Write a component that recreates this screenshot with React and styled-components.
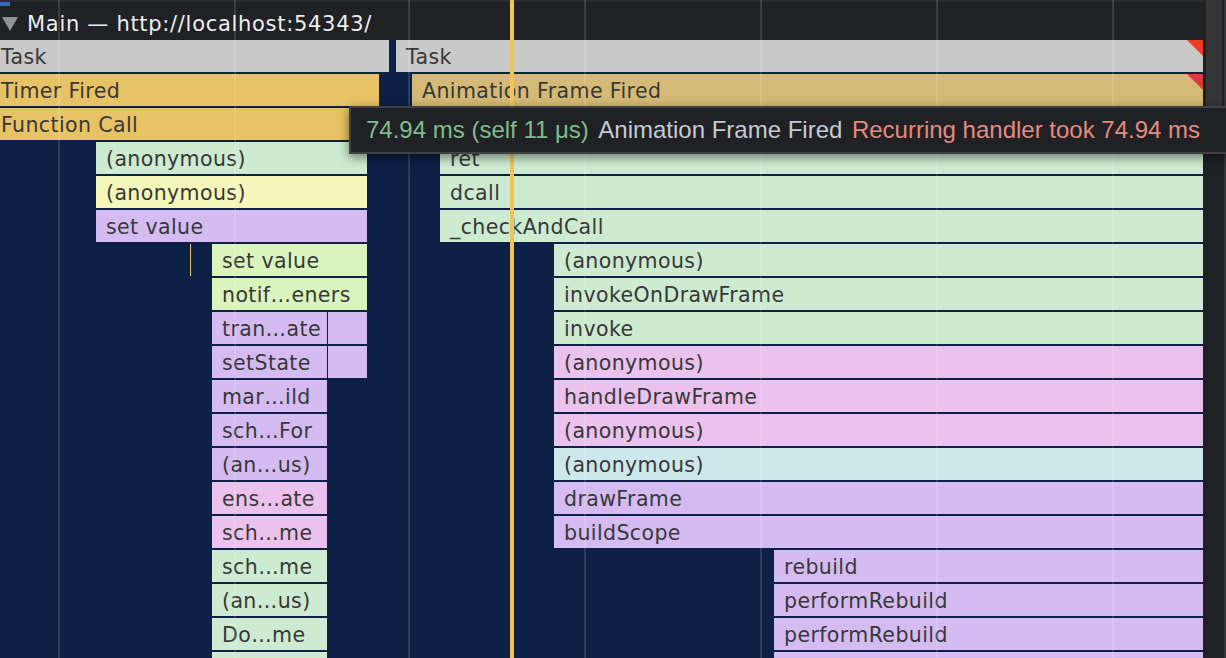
import React from 'react';
import styled, { createGlobalStyle } from 'styled-components';

const GlobalStyle = createGlobalStyle`
  html, body { margin: 0; padding: 0; background: #0c2145; overflow: hidden; }
`;

const colors = {
  task: '#c9c9c9',
  orange: '#e8c365',
  anim: '#d4ba76',
  green: '#cdebd0',
  lime: '#d9f5bd',
  yellow: '#f5f6b9',
  purple: '#d4bcf2',
  pink: '#ebc1ed',
  blue: '#cde8ea',
};

const Page = styled.div`
  position: relative;
  width: 1226px; height: 658px;
  overflow: hidden;
  display: flex;
  background: #0c2145;
`;
const Main = styled.div`
  width: 1204px;
  display: flex; flex-direction: column;
`;
const Side = styled.div`
  flex: 1;
  background: #202124;
  padding: 0 4px 0 2px;
  box-shadow: inset -2px 0 0 #35363a;
`;
const Thumb = styled.div`
  height: 107px;
  background: #363636;
`;
const Header = styled.div`
  height: 40px; flex: none;
  box-sizing: border-box;
  background: #202124;
  border-top: 2px solid #2a2b2e;
  position: relative;
  display: flex; align-items: center; gap: 9px;
  padding: 6px 0 0 2px;
  color: #eceef1;
  font: 21px "DejaVu Sans", sans-serif;
  letter-spacing: 0.7px;
`;
const Marker = styled.div`
  position: absolute; left: 0; top: 0;
  width: 10px; height: 4px;
  background: #3a66c4;
`;
const Arrow = styled.svg`
  width: 16px; height: 14px; flex: none;
`;
const Chart = styled.div`
  flex: 1;
  display: flex; flex-direction: column; gap: 2px;
`;
const Row = styled.div`
  height: 32px; flex: none;
  display: flex;
`;
const Bar = styled.div`
  position: relative;
  box-sizing: border-box;
  height: 32px; flex: none;
  width: ${p => p.$width}px;
  margin-left: ${p => p.$gap}px;
  padding-left: ${p => (p.$flush ? 1 : 10)}px;
  background: ${p => colors[p.$color]};
  color: #383838;
  font: 20.5px/35px "DejaVu Sans", sans-serif;
  letter-spacing: 0.4px;
  white-space: nowrap;
  overflow: hidden;
`;
const Tick = styled.div`
  height: 32px; width: 1px; flex: none;
  margin-left: ${p => p.$gap}px;
  background: #e8c365;
`;
const Corner = styled.div`
  position: absolute; right: 0; top: 0;
  width: 0; height: 0;
  border-top: 16px solid ${p => p.$color};
  border-left: 16px solid transparent;
`;
const GridLine = styled.div`
  position: absolute; top: 0; bottom: 0;
  left: ${p => p.$x}px;
  width: 2px;
  background: rgba(255, 255, 255, 0.13);
  pointer-events: none;
`;
const Cursor = styled.div`
  position: absolute; top: 0; bottom: 0; left: 510px;
  width: 4px;
  background: #f3c454;
`;
const Tooltip = styled.div`
  position: absolute; left: 349px; top: 106px;
  width: 884px; height: 48px;
  box-sizing: border-box;
  display: flex; align-items: center; gap: 9.5px;
  padding: 0 0 0 15px;
  background: #202124;
  border: 2px solid #3f4043;
  box-shadow: 0 3px 10px rgba(0, 0, 0, 0.5);
  font: 24px "Liberation Sans", Arial, sans-serif;
  white-space: nowrap;
`;
const Tip = styled.span`
  color: ${p => p.$color};
`;

// [from, to, label, colour] per row, in chart pixels
const rows = [
  [[0, 389, 'Task', 'task'], [396, 1203, 'Task', 'task', '#f03a24']],
  [[0, 379, 'Timer Fired', 'orange'], [412, 1203, 'Animation Frame Fired', 'anim', '#da3d38']],
  [[0, 379, 'Function Call', 'orange'], [440, 1203, '', 'green']],
  [[96, 367, '(anonymous)', 'green'], [440, 1203, 'ret', 'green']],
  [[96, 367, '(anonymous)', 'yellow'], [440, 1203, 'dcall', 'green']],
  [[96, 367, 'set value', 'purple'], [440, 1203, '_checkAndCall', 'green']],
  [[190, 191, null], [212, 367, 'set value', 'lime'], [554, 1203, '(anonymous)', 'green']],
  [[212, 367, 'notif…eners', 'lime'], [554, 1203, 'invokeOnDrawFrame', 'green']],
  [[212, 327, 'tran…ate', 'purple'], [328, 367, '', 'purple'], [554, 1203, 'invoke', 'green']],
  [[212, 327, 'setState', 'purple'], [328, 367, '', 'purple'], [554, 1203, '(anonymous)', 'pink']],
  [[212, 327, 'mar…ild', 'purple'], [554, 1203, 'handleDrawFrame', 'pink']],
  [[212, 327, 'sch…For', 'purple'], [554, 1203, '(anonymous)', 'pink']],
  [[212, 327, '(an…us)', 'purple'], [554, 1203, '(anonymous)', 'blue']],
  [[212, 327, 'ens…ate', 'pink'], [554, 1203, 'drawFrame', 'purple']],
  [[212, 327, 'sch…me', 'pink'], [554, 1203, 'buildScope', 'purple']],
  [[212, 327, 'sch…me', 'green'], [774, 1203, 'rebuild', 'purple']],
  [[212, 327, '(an…us)', 'green'], [774, 1203, 'performRebuild', 'purple']],
  [[212, 327, 'Do…me', 'green'], [774, 1203, 'performRebuild', 'purple']],
  [[212, 327, '', 'green'], [774, 1203, '', 'purple']],
];

const gridLines = [58, 234, 408, 584, 760, 936, 1112];

function FlameRow({ bars }) {
  let prev = 0;
  return (
    <Row>
      {bars.map(([from, to, label, color, corner]) => {
        const gap = from - prev;
        prev = to;
        if (label === null) return <Tick key={from} $gap={gap} />;
        return (
          <Bar key={from} $gap={gap} $width={to - from} $color={color} $flush={from === 0}>
            {label}
            {corner && <Corner $color={corner} />}
          </Bar>
        );
      })}
    </Row>
  );
}

export default function App() {
  return (
    <Page>
      <GlobalStyle />
      <Main>
        <Header>
          <Marker />
          <Arrow viewBox="0 0 16 14">
            <path d="M0 0h16L8 14z" fill="#8f9396" />
          </Arrow>
          Main — http://localhost:54343/
        </Header>
        <Chart>
          {rows.map((bars, i) => <FlameRow key={i} bars={bars} />)}
        </Chart>
      </Main>
      <Side>
        <Thumb />
      </Side>
      {gridLines.map(x => <GridLine key={x} $x={x} />)}
      <Cursor />
      <Tooltip>
        <Tip $color="#81bd8e">74.94 ms (self 11 μs)</Tip>
        <Tip $color="#c6cad2">Animation Frame Fired</Tip>
        <Tip $color="#e58a80">Recurring handler took 74.94 ms</Tip>
      </Tooltip>
    </Page>
  );
}
